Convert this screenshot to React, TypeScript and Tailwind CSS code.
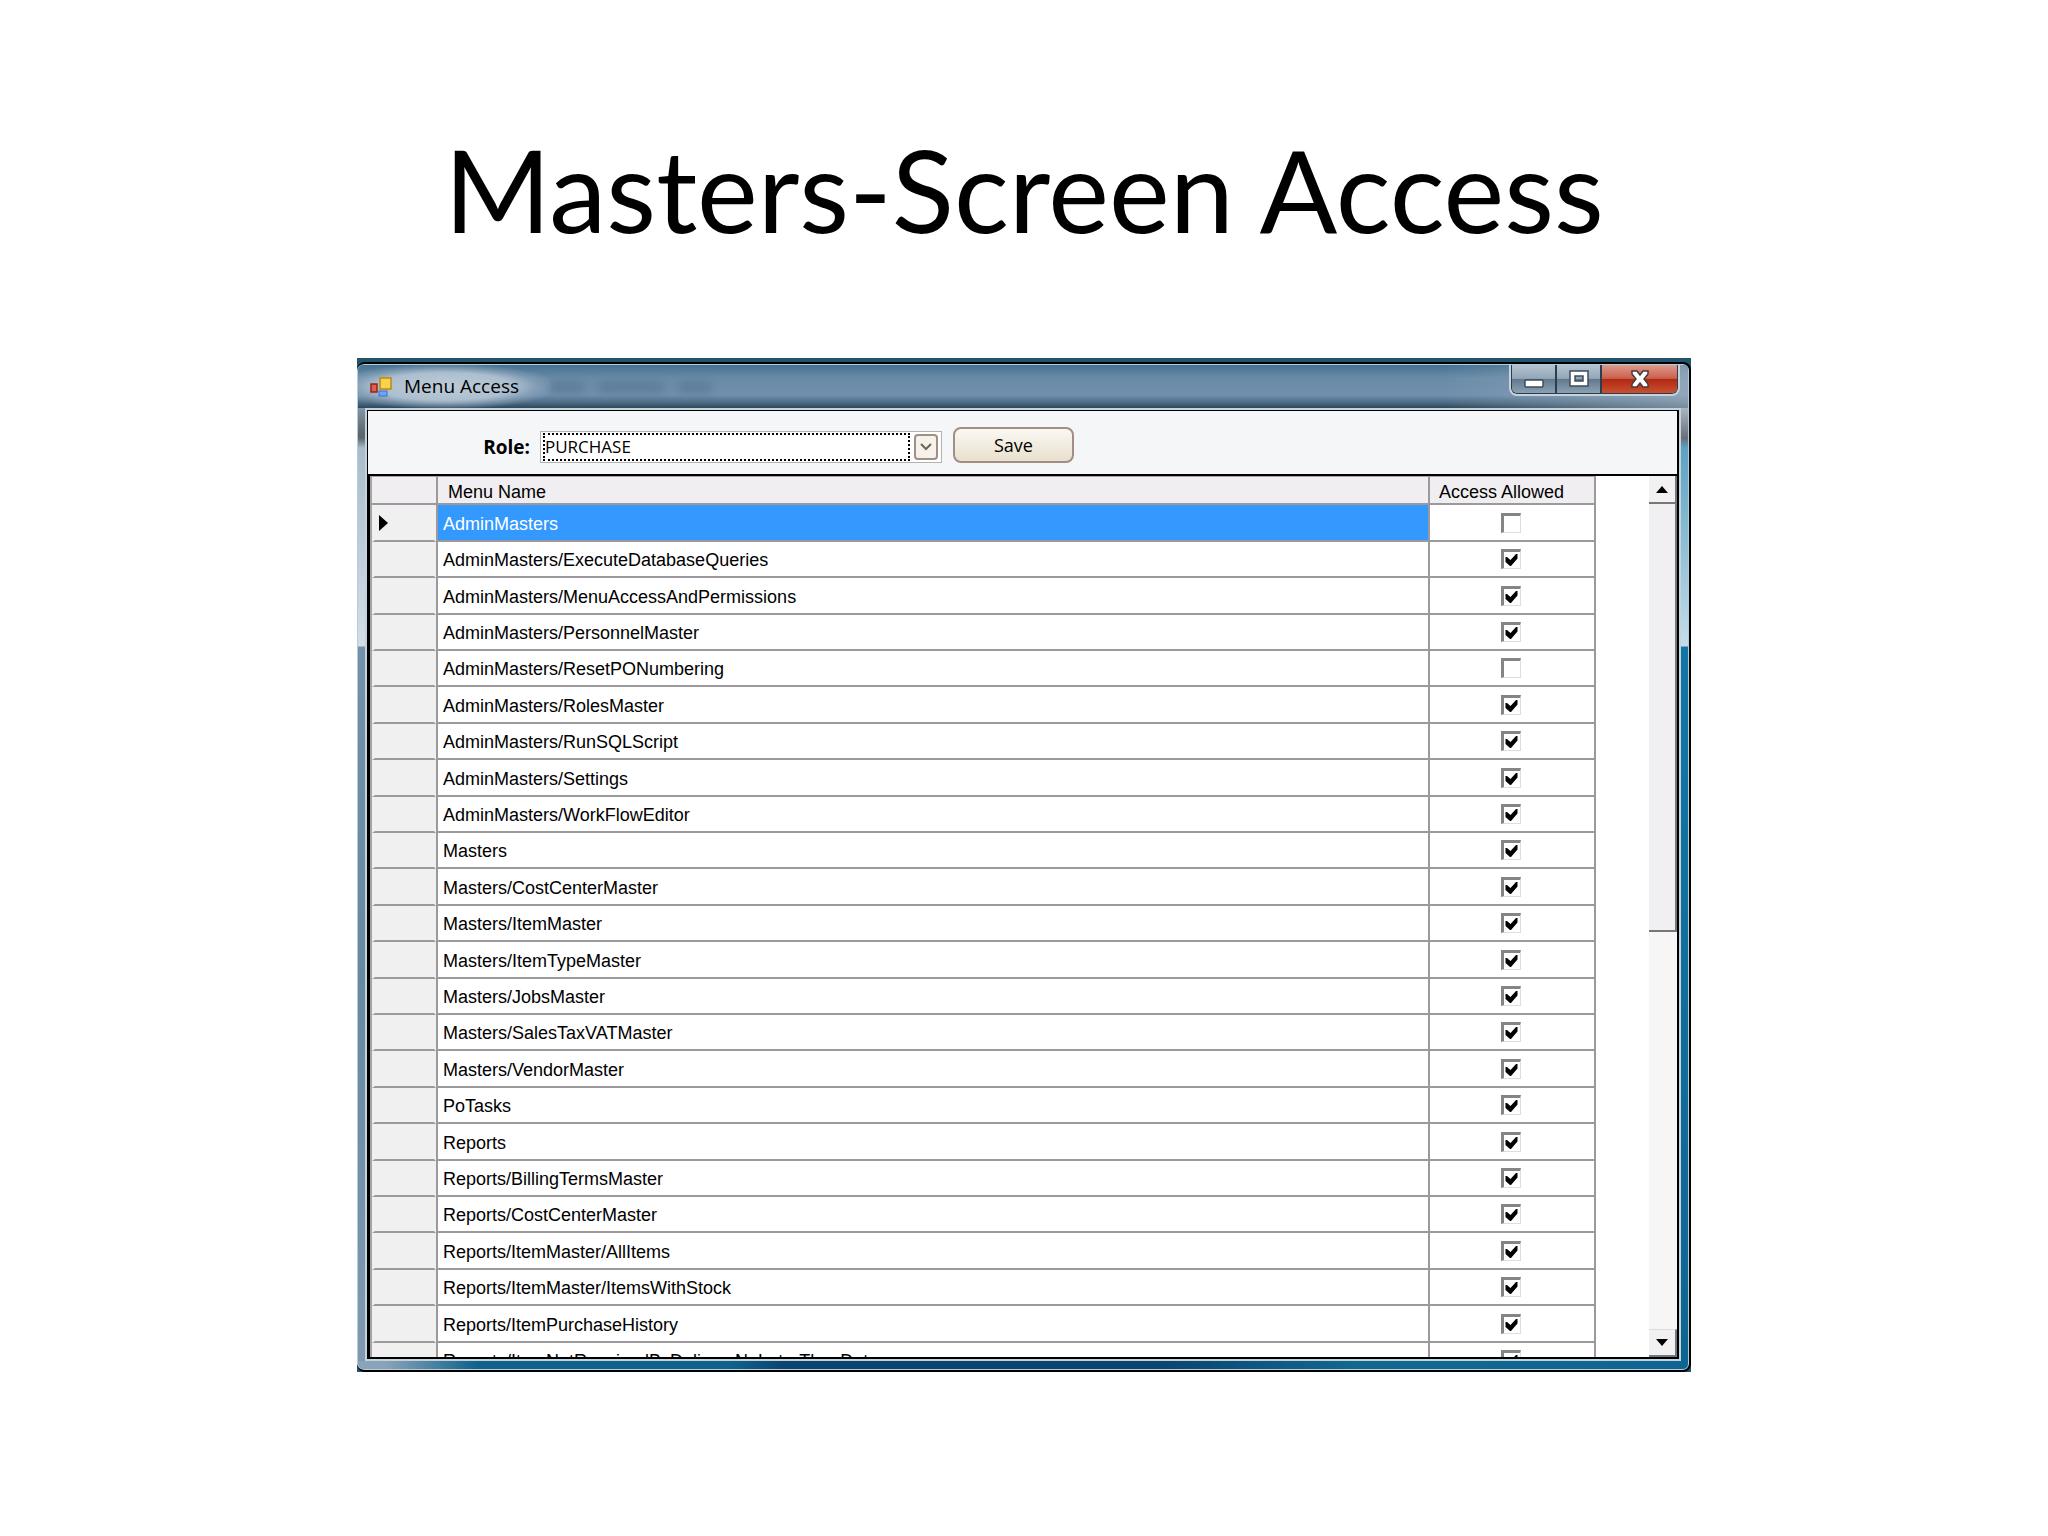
import React, { useState } from 'react';

const ROLES = ['PURCHASE'];

const MENUS = [
  { name: 'AdminMasters', allowed: false },
  { name: 'AdminMasters/ExecuteDatabaseQueries', allowed: true },
  { name: 'AdminMasters/MenuAccessAndPermissions', allowed: true },
  { name: 'AdminMasters/PersonnelMaster', allowed: true },
  { name: 'AdminMasters/ResetPONumbering', allowed: false },
  { name: 'AdminMasters/RolesMaster', allowed: true },
  { name: 'AdminMasters/RunSQLScript', allowed: true },
  { name: 'AdminMasters/Settings', allowed: true },
  { name: 'AdminMasters/WorkFlowEditor', allowed: true },
  { name: 'Masters', allowed: true },
  { name: 'Masters/CostCenterMaster', allowed: true },
  { name: 'Masters/ItemMaster', allowed: true },
  { name: 'Masters/ItemTypeMaster', allowed: true },
  { name: 'Masters/JobsMaster', allowed: true },
  { name: 'Masters/SalesTaxVATMaster', allowed: true },
  { name: 'Masters/VendorMaster', allowed: true },
  { name: 'PoTasks', allowed: true },
  { name: 'Reports', allowed: true },
  { name: 'Reports/BillingTermsMaster', allowed: true },
  { name: 'Reports/CostCenterMaster', allowed: true },
  { name: 'Reports/ItemMaster/AllItems', allowed: true },
  { name: 'Reports/ItemMaster/ItemsWithStock', allowed: true },
  { name: 'Reports/ItemPurchaseHistory', allowed: true },
  { name: 'Reports/ItemNotReceivedByDeliveryNoLaterThanDate', allowed: true },
];

function TitleBar() {
  return (
    <header className="flex h-[43px] items-start bg-[linear-gradient(to_bottom,#447290_0%,#6a8ba8_30%,#6f8fad_70%,#4c6a82_88%,#2d475c_100%)]">
      <div className="flex h-full items-center gap-3 bg-[radial-gradient(ellipse_at_45%_50%,#bccbd8_0%,#adbfcf_45%,#8fa6bc90_62%,#6f8fad00_76%)] pr-8 pl-3">
        <svg width="22" height="20" viewBox="0 0 22 20">
          <rect x="1" y="7" width="6" height="8" fill="#e0604e" stroke="#96221b" strokeWidth="1.5" />
          <rect x="10" y="1" width="11" height="11" fill="#fbd24c" stroke="#b98a10" strokeWidth="1.5" />
          <rect x="9" y="14" width="8" height="5" fill="#6ea4f2" stroke="#3a6fd0" />
        </svg>
        <h2 className="font-['Open_Sans',sans-serif] text-[19px] text-black">Menu Access</h2>
      </div>
      {/* shadows seen through the glass */}
      <div className="flex h-full items-center gap-4 blur-xs">
        <div className="h-3 w-8 bg-[#4f6d89]/50" />
        <div className="h-3 w-16 bg-[#4f6d89]/50" />
        <div className="h-3 w-8 bg-[#4f6d89]/50" />
      </div>
      <div className="flex h-full flex-1 items-start justify-end bg-[linear-gradient(to_right,#a5b4c200_75%,#a5b4c2a0_100%)] pr-2">
        <div className="flex h-[31px] overflow-hidden rounded-b-lg border-2 border-t-0 border-[#c6d2dc]">
          <div className="flex overflow-hidden rounded-b-md border border-t-0 border-[#2c3d4d]">
            <button aria-label="Minimize" className="flex w-[45px] items-center justify-center border-r-2 border-[#2c3d4d] bg-[linear-gradient(to_bottom,#b4c3d0_0%,#94a7b8_48%,#62788c_50%,#8ba0b3_100%)]">
              <svg width="20" height="20" viewBox="0 0 20 20">
                <rect x="1" y="11" width="18" height="7" rx="1" fill="#fff" stroke="#3f4b5a" strokeWidth="1.5" />
              </svg>
            </button>
            <button aria-label="Maximize" className="flex w-[45px] items-center justify-center border-r-2 border-[#2c3d4d] bg-[linear-gradient(to_bottom,#b4c3d0_0%,#94a7b8_48%,#62788c_50%,#8ba0b3_100%)]">
              <svg width="20" height="18" viewBox="0 0 20 18">
                <path fillRule="evenodd" d="M1 1h18v15H1z M6 6v5h8V6z" fill="#fff" stroke="#3f4b5a" strokeWidth="1.5" />
              </svg>
            </button>
            <button aria-label="Close" className="flex w-[75px] items-center justify-center bg-[linear-gradient(to_bottom,#dd9a8c_0%,#cb5f4c_48%,#b02812_50%,#c9512f_100%)]">
              <svg width="18" height="18" viewBox="0 0 18 18">
                <path d="M1 1h5l3 4 3-4h5v3l-4 5 4 5v3h-5l-3-4-3 4H1v-3l4-5-4-5z" fill="#fff" stroke="#4a3a40" strokeWidth="1.5" />
              </svg>
            </button>
          </div>
        </div>
      </div>
    </header>
  );
}

function Toolbar() {
  const [role, setRole] = useState(ROLES[0]);

  return (
    <div className="flex h-[63px] items-start bg-[#f5f6f8] pt-4">
      <label htmlFor="role" className="mt-1 w-[172px] pr-[10px] text-right font-['Open_Sans',sans-serif] text-[19px] leading-8 font-bold text-black">
        Role:
      </label>
      <div className="mt-1 flex h-8 w-[402px] items-center gap-1 border border-[#b5b1ad] bg-white px-[2px]">
        <select
          id="role"
          value={role}
          onChange={(e) => setRole(e.target.value)}
          className="h-7 min-w-0 flex-1 appearance-none border-2 border-dotted border-black bg-white font-['Open_Sans',sans-serif] text-[17px] leading-6 text-black outline-none"
        >
          {ROLES.map((r) => (
            <option key={r}>{r}</option>
          ))}
        </select>
        <span className="mr-px flex h-[26px] w-6 items-center justify-center rounded-sm border-2 border-[#a08f88] bg-[#f6f2ea]">
          <svg width="12" height="10" viewBox="0 0 12 10">
            <path d="M1 2l5 5 5-5" fill="none" stroke="#6b625c" strokeWidth="2" />
          </svg>
        </span>
      </div>
      <button className="ml-[11px] h-9 w-[121px] rounded-lg border-2 border-[#a18e85] bg-linear-to-b from-[#faf8f4] to-[#e9e0cd] font-['Open_Sans',sans-serif] text-lg leading-7 text-black">
        Save
      </button>
    </div>
  );
}

function AccessBox({ name, checked, onChange }: { name: string; checked: boolean; onChange: () => void }) {
  return (
    <label className="mx-auto grid size-5">
      <input
        type="checkbox"
        aria-label={name}
        checked={checked}
        onChange={onChange}
        className="col-start-1 row-start-1 size-5 appearance-none border-t-3 border-r border-b border-l-3 border-t-[#858585] border-r-[#dedede] border-b-[#dedede] border-l-[#858585] bg-white"
      />
      {checked && (
        <svg viewBox="0 0 20 20" className="pointer-events-none col-start-1 row-start-1 size-5">
          <path d="M4.500 8v5l4.500 4h1L16.500 9.500V5h-1.500L9.500 11 6 8z" fill="#000" />
        </svg>
      )}
    </label>
  );
}

function ScrollBar() {
  return (
    <div className="flex w-7 flex-col bg-[#f6f6f7]">
      <button aria-label="Scroll up" className="flex h-7 items-center justify-center border-r-2 border-b-2 border-[#77777a] bg-[#f1f1f2]">
        <svg width="12" height="7" viewBox="0 0 12 7">
          <path d="M6 0l6 7H0z" />
        </svg>
      </button>
      <div className="h-[428px] border-r-2 border-b-2 border-[#77777a] bg-[#f0f0f2]" />
      <button aria-label="Scroll down" className="mt-auto flex h-7 items-center justify-center border-t border-r-2 border-b-2 border-t-[#dcdcde] border-r-[#77777a] border-b-[#77777a] bg-[#f1f1f2]">
        <svg width="12" height="7" viewBox="0 0 12 7">
          <path d="M0 0h12L6 7z" />
        </svg>
      </button>
    </div>
  );
}

function AccessGrid() {
  const [menus, setMenus] = useState(MENUS);
  const selected = 0;

  const toggle = (index: number) =>
    setMenus(menus.map((m, i) => (i === index ? { ...m, allowed: !m.allowed } : m)));

  return (
    <div className="flex h-[883px] justify-between overflow-hidden border-t-2 border-l-2 border-black bg-white">
      <div className="mr-[53px] min-w-0 flex-1 overflow-hidden border-t border-l-2 border-[#a5a3a6]">
        <table className="w-full table-fixed border-separate border-spacing-0 font-['Liberation_Sans',sans-serif] text-lg leading-6 text-black">
          <colgroup>
            <col className="w-[64px]" />
            <col />
            <col className="w-[168px]" />
          </colgroup>
          <thead>
            <tr className="h-7 bg-[#f0eef0] text-left leading-[22px]">
              <th aria-label="Row" className="border-b-2 border-[#9b999c] p-0" />
              <th className="border-b-2 border-l-2 border-[#9b999c] p-0 pt-1 pl-[10px] font-normal">Menu Name</th>
              <th className="border-r-2 border-b-2 border-l-2 border-[#9b999c] p-0 pt-1 pl-[9px] font-normal">Access Allowed</th>
            </tr>
          </thead>
          <tbody>
            {menus.map((menu, i) => (
              <tr key={menu.name} className="h-9 nth-[5n+1]:h-[37px] nth-[5n+3]:h-[37px]">
                <td className="border-r-2 border-b-2 border-l-3 border-r-[#f0f0f1] border-b-[#9b999c] border-l-[#f0f0f1] bg-[#f0f0f1] p-0 pl-1">
                  {i === selected && (
                    <svg width="9" height="16" viewBox="0 0 9 16">
                      <path d="M0 0l9 8-9 8z" />
                    </svg>
                  )}
                </td>
                <td className={`overflow-hidden border-b-2 border-l-2 border-[#9b999c] p-0 pt-[2px] pl-[5px] whitespace-nowrap ${i === selected ? 'bg-[#3399ff] text-white' : ''}`}>
                  {menu.name}
                </td>
                <td className="border-r-2 border-b-2 border-l-2 border-[#9b999c] p-0 pr-[2px]">
                  <AccessBox name={menu.name} checked={menu.allowed} onChange={() => toggle(i)} />
                </td>
              </tr>
            ))}
          </tbody>
        </table>
      </div>
      <ScrollBar />
    </div>
  );
}

export default function App() {
  return (
    <main className="flex min-h-screen flex-col items-center bg-white px-8 pt-[116px]">
      <h1 className="text-center font-['Lato',sans-serif] text-[115px] leading-[144px] text-black">Masters-Screen Access</h1>

      <section className="mt-[98px] w-full max-w-[1334px] bg-[#24546c] pt-1">
        <div className="overflow-hidden rounded-lg border-y-2 border-r-2 border-black">
          <div className="overflow-hidden rounded-md border border-[#b4cddb] bg-[linear-gradient(to_right,#8ba3b8_0,#8ba3b8_2%,#0f628c_9%,#0f628c_28%,#0b4470_32%,#0b4470_60%,#11688f_75%,#0f6592_100%)]">
            <TitleBar />
            <div className="flex">
              {/* glass frame, left side */}
              <div className="w-[7px] bg-[linear-gradient(to_bottom,#8496a5_0,#5c666e_25px,#5c666e_30px,#a9bccb_40px,#d4dde6_238px,#7391a8_239px,#6688a0_60%,#8099b0_100%)]" />
              <div className="min-w-0 flex-1 border-2 border-[#c3d3de]">
                <div className="border border-r-2 border-b-2 border-black">
                  <Toolbar />
                  <AccessGrid />
                </div>
              </div>
              {/* glass frame, right side */}
              <div className="w-[7px] bg-[linear-gradient(to_bottom,#a9b6c4_0,#6a6f7c_30px,#5ca2c2_40px,#c4dcea_238px,#1176a5_239px,#0f6592_100%)]" />
            </div>
            <div className="h-2" />
          </div>
        </div>
      </section>
    </main>
  );
}
